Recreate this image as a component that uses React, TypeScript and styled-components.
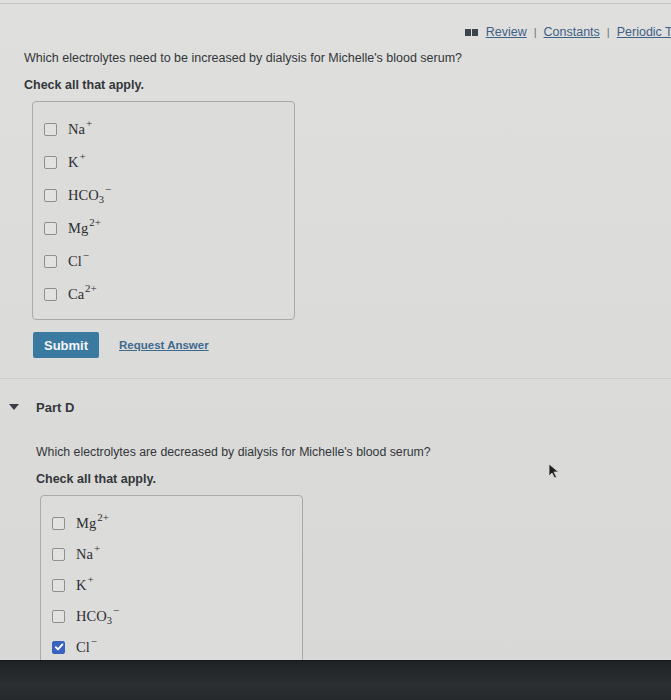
import React from "react";
import styled, { createGlobalStyle } from "styled-components";

const GlobalStyle = createGlobalStyle`
  html, body {
    margin: 0;
    padding: 0;
    background: #dadad8;
  }
  * {
    box-sizing: border-box;
  }
`;

type Option = { base: string; sub?: string; sup?: string; checked?: boolean };

const partCOptions: Option[] = [
  { base: "Na", sup: "+" },
  { base: "K", sup: "+" },
  { base: "HCO", sub: "3", sup: "−" },
  { base: "Mg", sup: "2+" },
  { base: "Cl", sup: "−" },
  { base: "Ca", sup: "2+" },
];

const partDOptions: Option[] = [
  { base: "Mg", sup: "2+" },
  { base: "Na", sup: "+" },
  { base: "K", sup: "+" },
  { base: "HCO", sub: "3", sup: "−" },
  { base: "Cl", sup: "−", checked: true },
];

const CheckBox = ({ checked }: { checked?: boolean }) => (
  <Box $checked={checked}>
    {checked && (
      <svg width="10" height="10" viewBox="0 0 10 10">
        <path d="M1.8 5.2 L4 7.4 L8.4 2.4" stroke="#fff" strokeWidth="1.9" fill="none" strokeLinecap="round" strokeLinejoin="round" />
      </svg>
    )}
  </Box>
);

const OptionList = ({ options, gap }: { options: Option[]; gap: number }) => (
  <Options $gap={gap}>
    {options.map((o, i) => (
      <OptionRow key={i}>
        <CheckBox checked={o.checked} />
        <Formula>
          {o.base}
          {o.sub && <Sub>{o.sub}</Sub>}
          {o.sup && <Sup>{o.sup}</Sup>}
        </Formula>
      </OptionRow>
    ))}
  </Options>
);

export default function App() {
  return (
    <Screen>
      <GlobalStyle />
      <Content>
        <TopLine />
        <LinksBar>
          <BookIcon>
            <span />
            <span />
          </BookIcon>
          <Link>Review</Link>
          <Pipe>|</Pipe>
          <Link>Constants</Link>
          <Pipe>|</Pipe>
          <Link>Periodic Table</Link>
        </LinksBar>

        <PartBody $indent={24}>
          <Question>Which electrolytes need to be increased by dialysis for Michelle's blood serum?</Question>
          <Instruction>Check all that apply.</Instruction>
          <AnswerBox $left={8} $pad={17}>
            <OptionList options={partCOptions} gap={13} />
          </AnswerBox>
          <Actions>
            <SubmitButton>Submit</SubmitButton>
            <RequestLink>Request Answer</RequestLink>
          </Actions>
        </PartBody>

        <Divider />

        <PartHeader>
          <Caret viewBox="0 0 10 6" width="10" height="6">
            <path d="M0 0 H10 L5 6 Z" fill="#3a3d42" />
          </Caret>
          <PartTitle>Part D</PartTitle>
        </PartHeader>

        <PartBody $indent={36}>
          <Question $top={29} $size={12.3}>
            Which electrolytes are decreased by dialysis for Michelle's blood serum?
          </Question>
          <Instruction>Check all that apply.</Instruction>
          <AnswerBox $left={4} $pad={17} $open>
            <OptionList options={partDOptions} gap={11} />
          </AnswerBox>
        </PartBody>

        <Cursor width="12" height="16" viewBox="0 0 12 16">
          <path d="M1 1 L1 13 L4 10 L6.5 15 L8.5 14 L6 9 L10.5 9 Z" fill="#1e1f22" stroke="#d8d8d6" strokeWidth="0.8" />
        </Cursor>
      </Content>
      <Bezel />
    </Screen>
  );
}

const Screen = styled.div`
  height: 700px;
  display: flex;
  flex-direction: column;
  overflow: hidden;
  background: linear-gradient(180deg, #dfdfdd 0%, #dbdbd9 50%, #d8d8d6 100%);
  font-family: "Liberation Sans", Arial, sans-serif;
  color: #2f3236;
`;

const Content = styled.div`
  flex: 1;
  overflow: hidden;
  position: relative;
`;

const TopLine = styled.div`
  height: 4px;
  border-bottom: 1px solid #c4c4c2;
`;

const LinksBar = styled.div`
  display: flex;
  justify-content: flex-end;
  align-items: center;
  gap: 6px;
  margin-top: 20px;
  margin-right: -24px;
  height: 16px;
  font-size: 12.5px;
`;

const BookIcon = styled.div`
  display: flex;
  gap: 1px;
  margin-right: 2px;
  span {
    width: 6px;
    height: 7px;
    background: #3c4450;
  }
`;

const Link = styled.span`
  color: #3f5f86;
  text-decoration: underline;
  white-space: nowrap;
`;

const Pipe = styled.span`
  color: #6a6f76;
  font-size: 11px;
  margin: 0 1px;
`;

const PartBody = styled.div<{ $indent: number }>`
  padding-left: ${(p) => p.$indent}px;
`;

const Question = styled.div<{ $top?: number; $size?: number }>`
  margin-top: ${(p) => p.$top ?? 10}px;
  font-size: ${(p) => p.$size ?? 12.5}px;
  line-height: 16px;
  color: #33363a;
`;

const Instruction = styled.div`
  margin-top: 11px;
  font-size: 12.5px;
  line-height: 16px;
  font-weight: bold;
  color: #33363a;
`;

const AnswerBox = styled.div<{ $left: number; $pad: number; $open?: boolean }>`
  margin-top: 8px;
  margin-left: ${(p) => p.$left}px;
  width: 263px;
  padding: ${(p) => p.$pad}px 0 ${(p) => (p.$open ? 40 : 15)}px 11px;
  border: 1px solid #a9aaac;
  border-radius: 4px;
  background: #dcdcda;
`;

const Options = styled.div<{ $gap: number }>`
  display: flex;
  flex-direction: column;
  gap: ${(p) => p.$gap}px;
`;

const OptionRow = styled.div`
  display: flex;
  align-items: center;
  gap: 11px;
  height: 20px;
`;

const Box = styled.span<{ $checked?: boolean }>`
  width: 13px;
  height: 13px;
  border-radius: 2px;
  border: 1px solid ${(p) => (p.$checked ? "#3c62c0" : "#8d8f93")};
  background: ${(p) => (p.$checked ? "#3c62c0" : "#e2e2e0")};
  display: flex;
  align-items: center;
  justify-content: center;
  flex-shrink: 0;
`;

const Formula = styled.span`
  font-family: "Liberation Serif", "Times New Roman", serif;
  font-size: 14.5px;
  color: #2c2e32;
  line-height: 20px;
`;

const Sub = styled.sub`
  font-size: 10.5px;
  vertical-align: -3px;
  line-height: 0;
`;

const Sup = styled.sup`
  font-size: 11px;
  vertical-align: 7px;
  line-height: 0;
  margin-left: 1px;
`;

const Actions = styled.div`
  display: flex;
  align-items: center;
  gap: 20px;
  margin-top: 12px;
  margin-left: 9px;
`;

const SubmitButton = styled.button`
  width: 66px;
  height: 26px;
  border: none;
  border-radius: 2px;
  background: #3b7aa0;
  color: #f4f6f8;
  font-family: "Liberation Sans", Arial, sans-serif;
  font-size: 13px;
  font-weight: bold;
  padding: 0;
`;

const RequestLink = styled.span`
  color: #3e6a8e;
  font-size: 11.5px;
  font-weight: bold;
  text-decoration: underline;
`;

const Divider = styled.div`
  margin-top: 20px;
  height: 1px;
  background: #cdcdcb;
`;

const PartHeader = styled.div`
  display: flex;
  align-items: center;
  margin-top: 20px;
  padding-left: 9px;
  height: 16px;
`;

const Caret = styled.svg`
  margin-right: 17px;
`;

const PartTitle = styled.span`
  font-size: 13px;
  font-weight: bold;
  color: #34373c;
`;

const Cursor = styled.svg`
  position: absolute;
  left: 548px;
  top: 463px;
`;

const Bezel = styled.div`
  height: 40px;
  background: linear-gradient(180deg, #1f2224 0%, #2b2f31 60%, #26292b 100%);
  border-top: 1px solid #15181a;
`;
